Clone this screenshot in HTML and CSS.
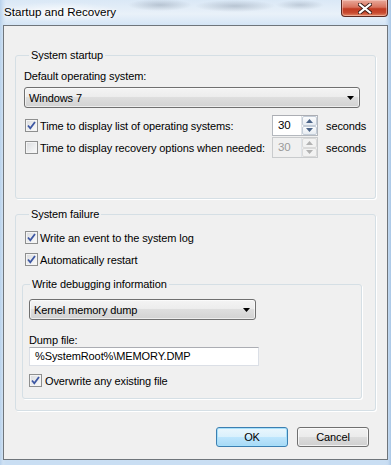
FILE: index.html
```html
<!DOCTYPE html>
<html lang="en">
<head>
    <meta charset="UTF-8">
    <title>Startup and Recovery</title>
    <link rel="stylesheet" href="styles.css">
</head>
<body>

<div class="window">
    <!-- Title Bar -->
    <div class="titlebar">
        <span class="title">Startup and Recovery</span>
        <span class="close-btn">
            <svg width="14" height="11" viewBox="0 0 14 11">
                <path d="M2 1.5 L12 9.5 M12 1.5 L2 9.5" stroke="#3a1b16" stroke-width="4" stroke-linecap="square"/>
                <path d="M2 1.5 L12 9.5 M12 1.5 L2 9.5" stroke="#ffffff" stroke-width="2.2" stroke-linecap="square"/>
            </svg>
        </span>
    </div>

    <div class="client">
        <!-- System startup -->
        <fieldset class="group startup">
            <legend>System startup</legend>
            <div class="label first-label">Default operating system:</div>
            <div class="combo os-combo">
                <span>Windows 7</span>
                <svg class="arrow" width="7" height="4" viewBox="0 0 7 4"><path d="M0 0 H7 L3.5 4 Z" fill="#000"/></svg>
            </div>
            <div class="row spin-row list-row">
                <span class="check on"><svg width="11" height="11" viewBox="0 0 11 11"><path d="M2 5.5 L4.3 8.3 L9 2" stroke="#3d57a3" stroke-width="1.8" fill="none"/></svg></span>
                <span class="row-text">Time to display list of operating systems:</span>
                <span class="spin">
                    <span class="spin-value">30</span>
                    <span class="spin-btns">
                        <span class="spin-up"><svg width="7" height="4" viewBox="0 0 7 4"><path d="M0 4 L3.5 0 L7 4 Z"/></svg></span>
                        <span class="spin-down"><svg width="7" height="4" viewBox="0 0 7 4"><path d="M0 0 H7 L3.5 4 Z"/></svg></span>
                    </span>
                </span>
                <span class="unit">seconds</span>
            </div>
            <div class="row spin-row recovery-row">
                <span class="check"></span>
                <span class="row-text">Time to display recovery options when needed:</span>
                <span class="spin disabled">
                    <span class="spin-value">30</span>
                    <span class="spin-btns">
                        <span class="spin-up"><svg width="7" height="4" viewBox="0 0 7 4"><path d="M0 4 L3.5 0 L7 4 Z"/></svg></span>
                        <span class="spin-down"><svg width="7" height="4" viewBox="0 0 7 4"><path d="M0 0 H7 L3.5 4 Z"/></svg></span>
                    </span>
                </span>
                <span class="unit">seconds</span>
            </div>
        </fieldset>

        <!-- System failure -->
        <fieldset class="group failure">
            <legend>System failure</legend>
            <div class="row event-row">
                <span class="check on"><svg width="11" height="11" viewBox="0 0 11 11"><path d="M2 5.5 L4.3 8.3 L9 2" stroke="#3d57a3" stroke-width="1.8" fill="none"/></svg></span>
                <span class="row-text">Write an event to the system log</span>
            </div>
            <div class="row restart-row">
                <span class="check on"><svg width="11" height="11" viewBox="0 0 11 11"><path d="M2 5.5 L4.3 8.3 L9 2" stroke="#3d57a3" stroke-width="1.8" fill="none"/></svg></span>
                <span class="row-text">Automatically restart</span>
            </div>

            <fieldset class="group debug">
                <legend>Write debugging information</legend>
                <div class="combo dump-combo">
                    <span>Kernel memory dump</span>
                    <svg class="arrow" width="7" height="4" viewBox="0 0 7 4"><path d="M0 0 H7 L3.5 4 Z" fill="#000"/></svg>
                </div>
                <div class="label dump-label">Dump file:</div>
                <div class="textbox">%SystemRoot%\MEMORY.DMP</div>
                <div class="row overwrite-row">
                    <span class="check on"><svg width="11" height="11" viewBox="0 0 11 11"><path d="M2 5.5 L4.3 8.3 L9 2" stroke="#3d57a3" stroke-width="1.8" fill="none"/></svg></span>
                    <span class="row-text">Overwrite any existing file</span>
                </div>
            </fieldset>
        </fieldset>

        <!-- Dialog Buttons -->
        <div class="buttons">
            <span class="btn default">OK</span>
            <span class="btn">Cancel</span>
        </div>
    </div>
</div>

</body>
</html>
```

FILE: styles.css
```css
/* Page */
body {
    margin: 0;
    font-family: "Liberation Sans", Arial, sans-serif;
    font-size: 11px;
    letter-spacing: -0.1px;
    color: #000;
}

/* Aero window frame */
.window {
    width: 391px;
    height: 465px;
    overflow: hidden;
    background:
        linear-gradient(90deg, #b9d2ec 0, #cfe1f3 3px, rgba(207,225,243,0) 6px),
        linear-gradient(270deg, #a9c7e6 0, #c6dbf1 3px, rgba(198,219,241,0) 6px),
        linear-gradient(180deg, #dae8f6 0, #e9f1f9 14px, #d3e4f5 26px, #c9def3 100%);
}

/* Title Bar */
.titlebar {
    height: 25px;
    display: flex;
    align-items: flex-start;
    padding-left: 4px;
    background:
        radial-gradient(ellipse 32px 6px at 160px 5px, rgba(90,105,125,0.30), rgba(90,105,125,0) 100%),
        radial-gradient(ellipse 40px 6px at 235px 6px, rgba(90,105,125,0.30), rgba(90,105,125,0) 100%),
        radial-gradient(ellipse 24px 5px at 300px 5px, rgba(90,105,125,0.25), rgba(90,105,125,0) 100%),
        radial-gradient(ellipse 60px 10px at 60px 12px, rgba(255,255,255,0.7), rgba(255,255,255,0) 100%);
}

.title {
    margin-top: 5px;
    font-size: 11.6px;
    letter-spacing: 0;
    line-height: 14px;
    text-shadow: 0 0 6px #fff, 0 0 3px #fff;
}

.close-btn {
    margin-left: auto;
    margin-right: 3px;
    width: 45px;
    height: 16px;
    display: flex;
    align-items: center;
    justify-content: center;
    border: 1px solid #5d2a22;
    border-top: none;
    border-radius: 0 0 4px 4px;
    background: linear-gradient(180deg, #e9a99b 0, #d8735e 45%, #c13b22 55%, #c84a30 80%, #e38a68 100%);
    box-shadow: inset 0 0 0 1px rgba(255,220,210,0.45);
}

/* Client area */
.client {
    margin: 0 3px;
    height: 411px;
    padding: 22px 11px 0 11px;
    border: 1px solid #6f757b;
    background-color: #f0f0f0;
}

/* Group boxes */
.group {
    margin: 0;
    min-width: 0;
    padding: 0 8px;
    border: 1px solid #d5dfe5;
    border-radius: 3px;
    box-shadow: 1px 1px 0 #fff;
}

.group legend {
    padding: 0 2px;
    margin-left: 5px;
    line-height: 15px;
}

.startup {
    padding-bottom: 40px;
}

.failure {
    margin-top: 8px;
    padding-bottom: 11px;
}

.debug {
    margin: 9px 5px 0 -2px;
    padding: 0 6px 9px 6px;
}

.debug legend {
    margin-left: 1px;
}

.label {
    line-height: 15px;
}

.first-label {
    margin-top: 6px;
}

/* Combo boxes */
.combo {
    height: 19px;
    display: flex;
    align-items: center;
    justify-content: space-between;
    padding: 0 4px 0 4px;
    border: 1px solid #707070;
    border-radius: 3px;
    background: linear-gradient(180deg, #f4f4f4 0, #ececec 50%, #dedede 50%, #d2d2d2 100%);
    box-shadow: inset 0 0 0 1px rgba(255,255,255,0.6);
}

.os-combo {
    width: 326px;
    margin-top: 3px;
}

.dump-combo {
    width: 217px;
    margin-top: 7px;
}

.arrow {
    margin-right: 1px;
}

/* Rows with checkboxes */
.row {
    display: flex;
    align-items: center;
    height: 17px;
    padding-left: 1px;
}

.spin-row {
    height: 21px;
}

.list-row {
    margin-top: 7px;
}

.recovery-row {
    margin-top: 1px;
}

.event-row {
    margin-top: 7px;
}

.restart-row {
    margin-top: 5px;
}

.overwrite-row {
    margin-top: 6px;
    padding-left: 0;
}

.row-text {
    flex: 1;
    min-width: 0;
    white-space: nowrap;
}

.check {
    flex: none;
    width: 11px;
    height: 11px;
    margin-right: 2px;
    border: 1px solid #8e8f8f;
    background: linear-gradient(135deg, #d9dbde 0, #eeeff0 60%, #fbfbfb 100%);
    box-shadow: inset 0 0 0 1px #f4f4f4;
    display: flex;
}

.overwrite-row .check {
    margin-right: 3px;
}

/* Spin boxes */
.spin {
    flex: none;
    width: 44px;
    height: 19px;
    display: flex;
    border: 1px solid #b4b8be;
    border-top-color: #abadb3;
    background-color: #fff;
    margin-right: 8px;
}

.spin-value {
    flex: 1;
    padding-left: 5px;
    line-height: 19px;
    font-size: 11.5px;
}

.spin-btns {
    width: 15px;
    display: flex;
    flex-direction: column;
    border-left: 1px solid #dfe3e8;
}

.spin-up, .spin-down {
    flex: 1;
    display: flex;
    align-items: center;
    justify-content: center;
    border: 1px solid #c4cdd8;
    border-radius: 2px;
    background: linear-gradient(180deg, #fbfcfd 0, #e7ecf2 100%);
}

.spin-up svg, .spin-down svg {
    fill: #4b6488;
}

.spin.disabled {
    background-color: #f0f0f0;
    border-color: #c9cbcd;
    color: #9a9a9a;
}

.spin.disabled .spin-up, .spin.disabled .spin-down {
    border-color: #dadada;
    background: #f2f2f2;
}

.spin.disabled svg {
    fill: #b2b2b2;
}

.unit {
    flex: none;
    width: 41px;
    white-space: nowrap;
}

/* Dump file */
.dump-label {
    margin-top: 13px;
    line-height: 14px;
}

.textbox {
    width: 223px;
    height: 17px;
    padding-left: 5px;
    line-height: 17px;
    border: 1px solid #dbdfe6;
    border-top-color: #abadb3;
    background-color: #fff;
}

/* Dialog Buttons */
.buttons {
    display: flex;
    justify-content: flex-end;
    gap: 9px;
    margin-top: 16px;
    padding-right: 7px;
}

.btn {
    width: 70px;
    height: 18px;
    line-height: 18px;
    text-align: center;
    border: 1px solid #707070;
    border-radius: 3px;
    background: linear-gradient(180deg, #f2f2f2 0, #ebebeb 50%, #dddddd 50%, #cfcfcf 100%);
    box-shadow: inset 0 0 0 1px rgba(255,255,255,0.7);
}

.btn.default {
    border-color: #3c7fb1;
    background: linear-gradient(180deg, #eaf6fd 0, #d9f0fc 50%, #bee6fd 50%, #a7d9f5 100%);
    box-shadow: inset 0 0 0 1px #a6e0fb;
}
```
